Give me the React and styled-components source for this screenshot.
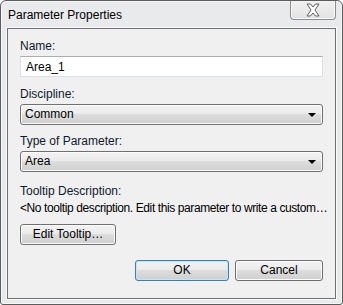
import React from 'react';
import styled, { createGlobalStyle, css } from 'styled-components';

const GlobalStyle = createGlobalStyle`
    html, body {
        margin: 0;
        padding: 0;
        background: #ffffff;
    }
    body {
        font-family: "Liberation Sans", Arial, sans-serif;
        font-size: 12px;
    }
`;

const Window = styled.div`
    box-sizing: border-box;
    width: 343px;
    height: 305px;
    display: flex;
    flex-direction: column;
    background: #e9eaec;
    border: 1px solid #5c5c5c;
    border-radius: 6px 6px 3px 3px;
    box-shadow: inset 0 0 0 1px #f7f7f7;
    overflow: hidden;
`;

const TitleBar = styled.div`
    display: flex;
    align-items: flex-start;
    height: 27px;
    flex-shrink: 0;
`;

const Title = styled.div`
    padding: 7px 0 0 7px;
    font-size: 12px;
    line-height: 15px;
    color: #000;
`;

const CloseButton = styled.div`
    box-sizing: border-box;
    margin: -1px 6px 0 auto;
    width: 46px;
    height: 20px;
    display: flex;
    align-items: center;
    justify-content: center;
    border: 1px solid #8d8d8d;
    border-top: none;
    border-radius: 0 0 4px 4px;
    background: linear-gradient(#f2f2f2, #e2e2e2);
    box-shadow: inset 0 0 0 1px #f8f8f8;
`;

const Panel = styled.div`
    flex: 1;
    margin: 0 6px 5px 6px;
    padding: 10px 12px 0 12px;
    display: flex;
    flex-direction: column;
    background: #f0f0f0;
    border: 1px solid #707070;
    box-shadow: 0 0 0 1px #fafafa;
`;

const Label = styled.div`
    line-height: 15px;
    color: #0f1a2e;
    margin-top: ${p => p.$gap || 0}px;
`;

const Description = styled.div`
    margin-top: 2px;
    line-height: 15px;
    color: #000;
    letter-spacing: -0.4px;
    white-space: nowrap;
`;

const TextInput = styled.div`
    box-sizing: border-box;
    margin-top: 2px;
    height: 21px;
    padding: 0 5px;
    display: flex;
    align-items: center;
    background: #fff;
    border: 1px solid #dbdfe6;
    border-top-color: #abadb3;
    color: #000;
`;

const buttonFace = css`
    box-sizing: border-box;
    border: 1px solid #707070;
    border-radius: 3px;
    background: linear-gradient(#f2f2f2 0%, #ebebeb 45%, #dddddd 50%, #cfcfcf 100%);
    box-shadow: inset 0 0 0 1px #fcfcfc;
    color: #000;
    line-height: 15px;
`;

const Select = styled.div`
    ${buttonFace};
    margin-top: 2px;
    height: 21px;
    padding: 0 6px 0 4px;
    display: flex;
    align-items: center;
    justify-content: space-between;
`;

const Arrow = styled.span`
    width: 0;
    height: 0;
    border-left: 4px solid transparent;
    border-right: 4px solid transparent;
    border-top: 4px solid #000;
`;

const Button = styled.div`
    ${buttonFace};
    width: ${p => p.$w}px;
    height: 21px;
    display: flex;
    align-items: center;
    justify-content: center;
    ${p => p.$default && css`
        border-color: #3c7fb1;
        box-shadow: inset 0 0 0 1px #c4e5f6;
    `}
`;

const EditRow = styled.div`
    margin-top: 8px;
    display: flex;
`;

const Footer = styled.div`
    margin-top: 15px;
    display: flex;
    justify-content: flex-end;
    gap: 6px;
`;

const CloseIcon = () => (
    <svg width="16" height="14" viewBox="0 0 16 14">
        <path
            d="M2 1 H5.5 L8 4 L10.5 1 H14 L10 7 L14 13 H10.5 L8 10 L5.5 13 H2 L6 7 Z"
            fill="#ffffff"
            stroke="#5f5f5f"
            strokeWidth="1"
            strokeLinejoin="round"
        />
    </svg>
);

const App = () => (
    <>
        <GlobalStyle />
        <Window>
            <TitleBar>
                <Title>Parameter Properties</Title>
                <CloseButton>
                    <CloseIcon />
                </CloseButton>
            </TitleBar>
            <Panel>
                <Label>Name:</Label>
                <TextInput>Area_1</TextInput>
                <Label $gap={10}>Discipline:</Label>
                <Select>
                    Common
                    <Arrow />
                </Select>
                <Label $gap={9}>Type of Parameter:</Label>
                <Select>
                    Area
                    <Arrow />
                </Select>
                <Label $gap={12}>Tooltip Description:</Label>
                <Description>&lt;No tooltip description. Edit this parameter to write a custom…</Description>
                <EditRow>
                    <Button $w={96}>Edit Tooltip…</Button>
                </EditRow>
                <Footer>
                    <Button $w={94} $default>OK</Button>
                    <Button $w={88}>Cancel</Button>
                </Footer>
            </Panel>
        </Window>
    </>
);

export default App;
